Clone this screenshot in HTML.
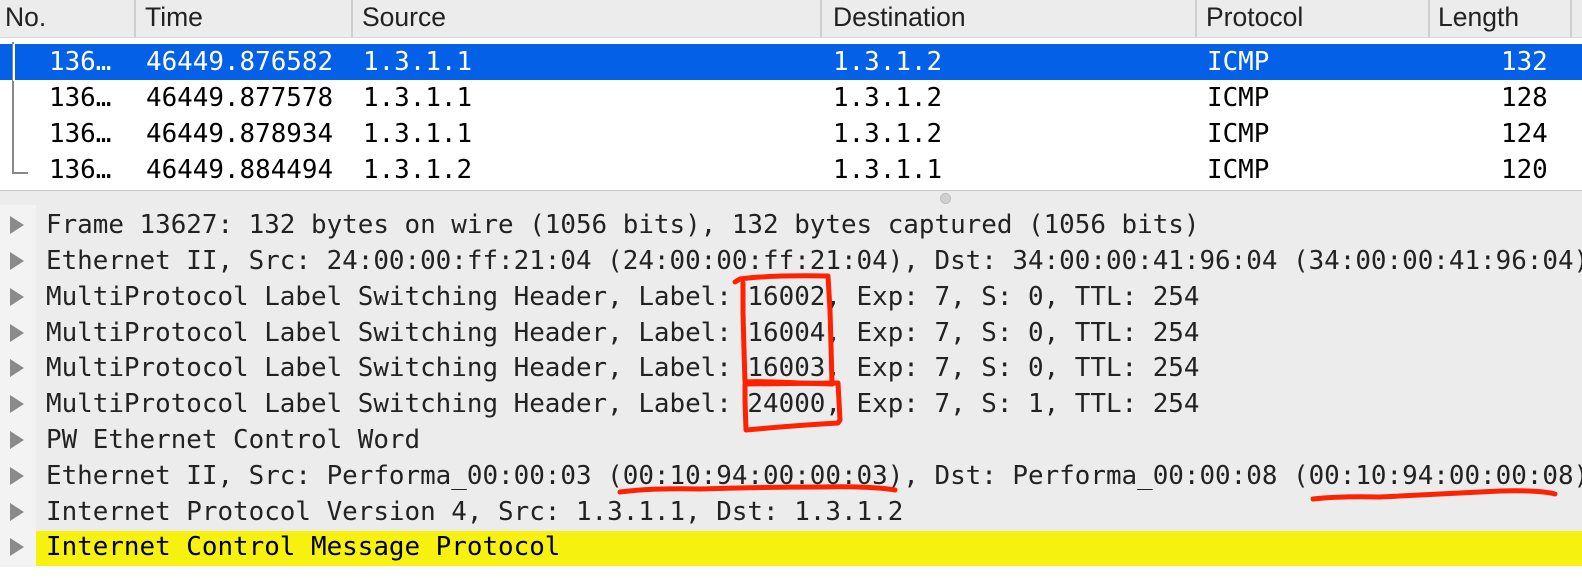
<!DOCTYPE html>
<html><head><style>
body{margin:0;width:1582px;height:578px;overflow:hidden;background:#fff;position:relative;font-family:"DejaVu Sans Mono","Liberation Mono",monospace;}
.hdr{position:absolute;left:0;top:0;width:1582px;height:37px;background:#ececec;border-bottom:1px solid #d8d8d8;font-family:"Liberation Sans",sans-serif;font-size:26.5px;color:#222;}
.hdr span{position:absolute;top:2px}
.hdr i{position:absolute;top:0;width:2px;height:37px;background:#cfcfcf}
.row{position:absolute;left:0;width:1582px;height:36px;font-size:25.9px;line-height:36px;color:#000}
.row span{position:absolute;top:0}
.sel{background:#0460e6;color:#fff}
.sep{position:absolute;left:0;top:190px;width:1582px;height:14px;background:#ececec;border-top:1px solid #c8c8c8;border-bottom:1px solid #c8c8c8}
.det{position:absolute;left:0;top:205px;width:1582px;height:330px;background:#ececec}
.gut{position:absolute;left:0;top:205px;width:36px;height:362px;background:#f3f3f3}
.d{position:absolute;left:0;height:36px;width:1582px;font-size:25.9px;line-height:36px;color:#222;white-space:pre}
.d b{position:absolute;left:10px;top:9px;width:0;height:0;border-top:9px solid transparent;border-bottom:9px solid transparent;border-left:14px solid #8a8a8a}
.d span{position:absolute;left:46px}
</style></head><body>
<div class="hdr">
<span style="left:5px">No.</span><i style="left:134px"></i>
<span style="left:145px">Time</span><i style="left:351px"></i>
<span style="left:362px">Source</span><i style="left:820px"></i>
<span style="left:833px">Destination</span><i style="left:1195px"></i>
<span style="left:1206px">Protocol</span><i style="left:1428px"></i>
<span style="left:1438px">Length</span><i style="left:1570px"></i>
</div>
<div class="row sel" style="top:44px"><span style="left:49px">136…</span><span style="left:146px">46449.876582</span><span style="left:363px">1.3.1.1</span><span style="left:833px">1.3.1.2</span><span style="left:1207px">ICMP</span><span style="left:1500px;left:1501px">132</span></div>
<div class="row" style="top:80px"><span style="left:49px">136…</span><span style="left:146px">46449.877578</span><span style="left:363px">1.3.1.1</span><span style="left:833px">1.3.1.2</span><span style="left:1207px">ICMP</span><span style="left:1501px">128</span></div>
<div class="row" style="top:116px"><span style="left:49px">136…</span><span style="left:146px">46449.878934</span><span style="left:363px">1.3.1.1</span><span style="left:833px">1.3.1.2</span><span style="left:1207px">ICMP</span><span style="left:1501px">124</span></div>
<div class="row" style="top:152px"><span style="left:49px">136…</span><span style="left:146px">46449.884494</span><span style="left:363px">1.3.1.2</span><span style="left:833px">1.3.1.1</span><span style="left:1207px">ICMP</span><span style="left:1501px">120</span></div>
<div style="position:absolute;left:12px;top:42px;width:2px;height:131px;background:#888"></div>
<div style="position:absolute;left:12px;top:172px;width:16px;height:2px;background:#888"></div>
<div style="position:absolute;left:13px;top:44px;width:2px;height:37px;background:#fff"></div>
<div class="sep"></div>
<div style="position:absolute;left:940px;top:193px;width:9px;height:9px;border-radius:50%;background:#d0d0d0;border:1px solid #bbb"></div>
<div class="det"></div>
<div class="gut"></div>
<div style="position:absolute;left:36px;top:531px;width:1546px;height:35px;background:#f6f10f"></div>
<div class="d" style="top:207px"><b></b><span>Frame 13627: 132 bytes on wire (1056 bits), 132 bytes captured (1056 bits)</span></div>
<div class="d" style="top:243px"><b></b><span>Ethernet II, Src: 24:00:00:ff:21:04 (24:00:00:ff:21:04), Dst: 34:00:00:41:96:04 (34:00:00:41:96:04)</span></div>
<div class="d" style="top:279px"><b></b><span>MultiProtocol Label Switching Header, Label: 16002, Exp: 7, S: 0, TTL: 254</span></div>
<div class="d" style="top:315px"><b></b><span>MultiProtocol Label Switching Header, Label: 16004, Exp: 7, S: 0, TTL: 254</span></div>
<div class="d" style="top:350px"><b></b><span>MultiProtocol Label Switching Header, Label: 16003, Exp: 7, S: 0, TTL: 254</span></div>
<div class="d" style="top:386px"><b></b><span>MultiProtocol Label Switching Header, Label: 24000, Exp: 7, S: 1, TTL: 254</span></div>
<div class="d" style="top:422px"><b></b><span>PW Ethernet Control Word</span></div>
<div class="d" style="top:458px"><b></b><span>Ethernet II, Src: Performa_00:00:03 (00:10:94:00:00:03), Dst: Performa_00:00:08 (00:10:94:00:00:08)</span></div>
<div class="d" style="top:494px"><b></b><span>Internet Protocol Version 4, Src: 1.3.1.1, Dst: 1.3.1.2</span></div>
<div class="d" style="top:529px;color:#000"><b></b><span>Internet Control Message Protocol</span></div>
<svg style="position:absolute;left:0;top:0" width="1582" height="578">
<g fill="none" stroke="#ff2200" stroke-width="5" stroke-linecap="round" stroke-linejoin="round">
<path d="M735 282 L740 279 Q770 275 828 276 L830 310 L831 345 L832 384 L800 383 Q760 381 745 382 L744 350 L743 312 L743 283"/>
<path d="M745 384 L838 383 L840 420 L838 423 Q800 425 746 430 L745 400 Z"/>
<path d="M620 492 Q650 488 700 489 Q760 487 820 487 Q870 486 895 490"/>
<path d="M1313 499 Q1340 496 1380 497 Q1440 494 1500 491 Q1540 490 1555 494"/>
</g>
</svg>
</body></html>
